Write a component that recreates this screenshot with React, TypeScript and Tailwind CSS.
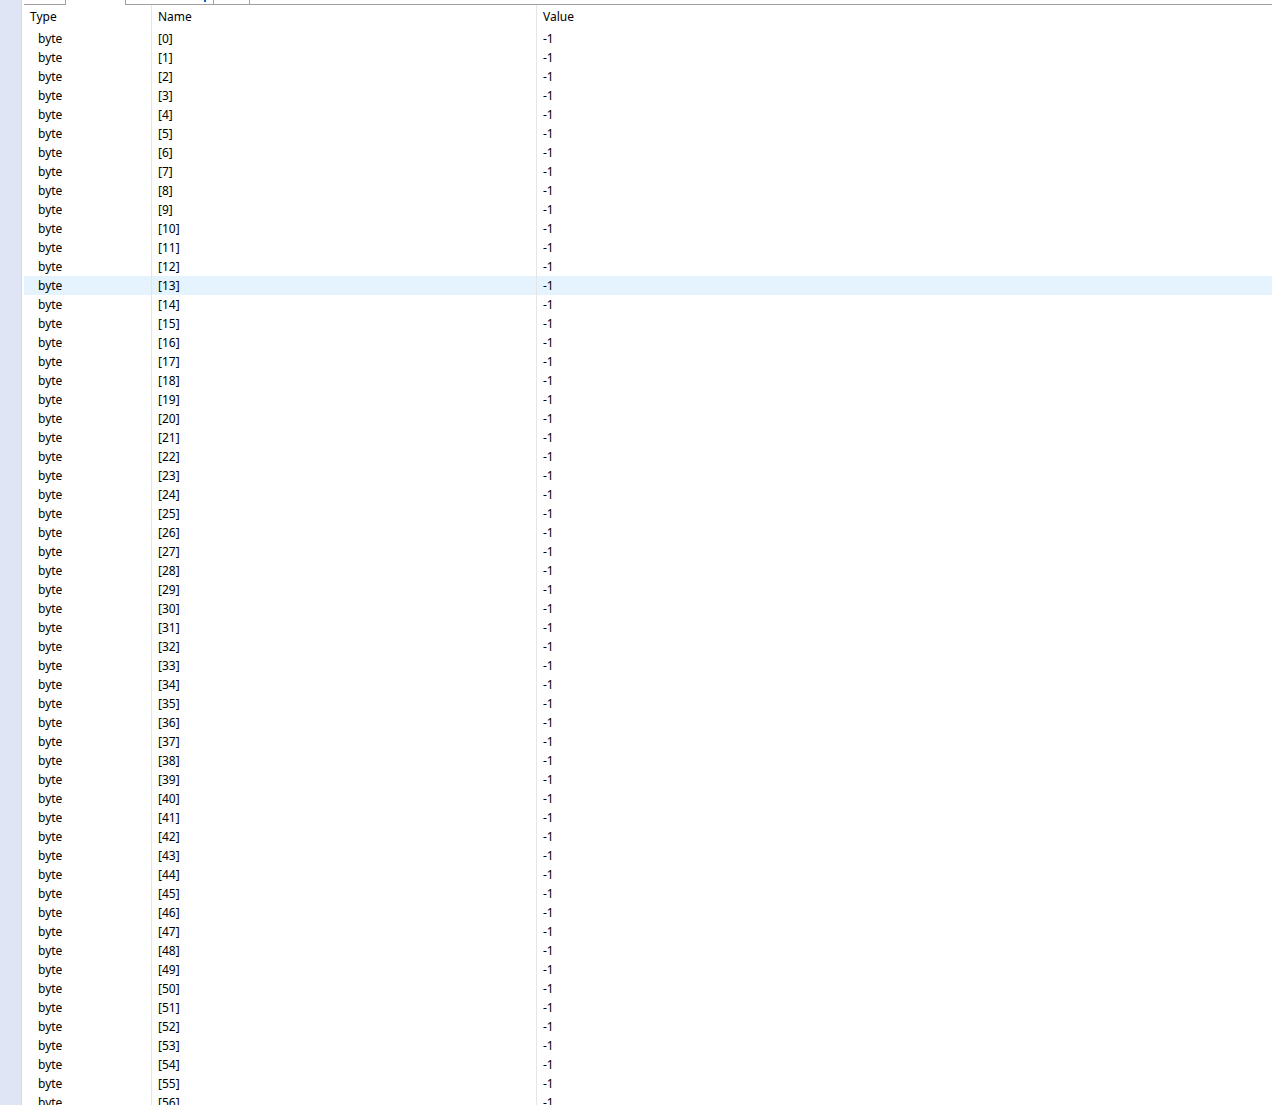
import React from "react";

const ROWS = Array.from({ length: 57 }, (_, i) => i);
const SELECTED = 13;

function TabStrip() {
  return (
    <div className="flex h-[5px] shrink-0">
      <div className="w-[42px] border-b border-r border-[#a0a0a0]" />
      <div className="w-[59px]" />
      <div className="relative w-[89px] border-b border-l border-r border-[#a0a0a0]">
        <div className="absolute right-[7px] top-0 h-[2px] w-[2px] bg-[#1060c0]" />
      </div>
      <div className="w-[36px] border-b border-r border-[#a0a0a0]" />
      <div className="flex-1 border-b border-[#a0a0a0]" />
    </div>
  );
}

export default function App() {
  return (
    <div
      className="flex h-[1105px] w-[1272px] overflow-hidden bg-white text-[12px] text-black"
      style={{ fontFamily: '"Noto Sans", "Open Sans", sans-serif' }}
    >
      <div className="w-[22px] shrink-0 border-r border-[#d3d9ea] bg-[#dfe5f5]" />
      <div className="ml-[2px] flex min-w-0 flex-1 flex-col">
        <TabStrip />
        <div className="grid grid-cols-[128px_385px_1fr]">
          <div className="flex h-[24px] items-center border-r border-[#e5e5e5] pl-[6px]">Type</div>
          <div className="flex h-[24px] items-center border-r border-[#e5e5e5] pl-[6px]">Name</div>
          <div className="flex h-[24px] items-center pl-[6px]">Value</div>
        </div>
        <div className="flex flex-col">
          {ROWS.map((i) => (
            <div
              key={i}
              className={
                "grid h-[19px] shrink-0 grid-cols-[128px_385px_1fr] " +
                (i === SELECTED ? "bg-[#e5f3ff]" : "")
              }
            >
              <div className="flex items-center border-r border-[#e5e5e5] pl-[14px]">byte</div>
              <div className="flex items-center border-r border-[#e5e5e5] pl-[6px]">[{i}]</div>
              <div className="flex items-center pl-[6px]">-1</div>
            </div>
          ))}
        </div>
      </div>
    </div>
  );
}
